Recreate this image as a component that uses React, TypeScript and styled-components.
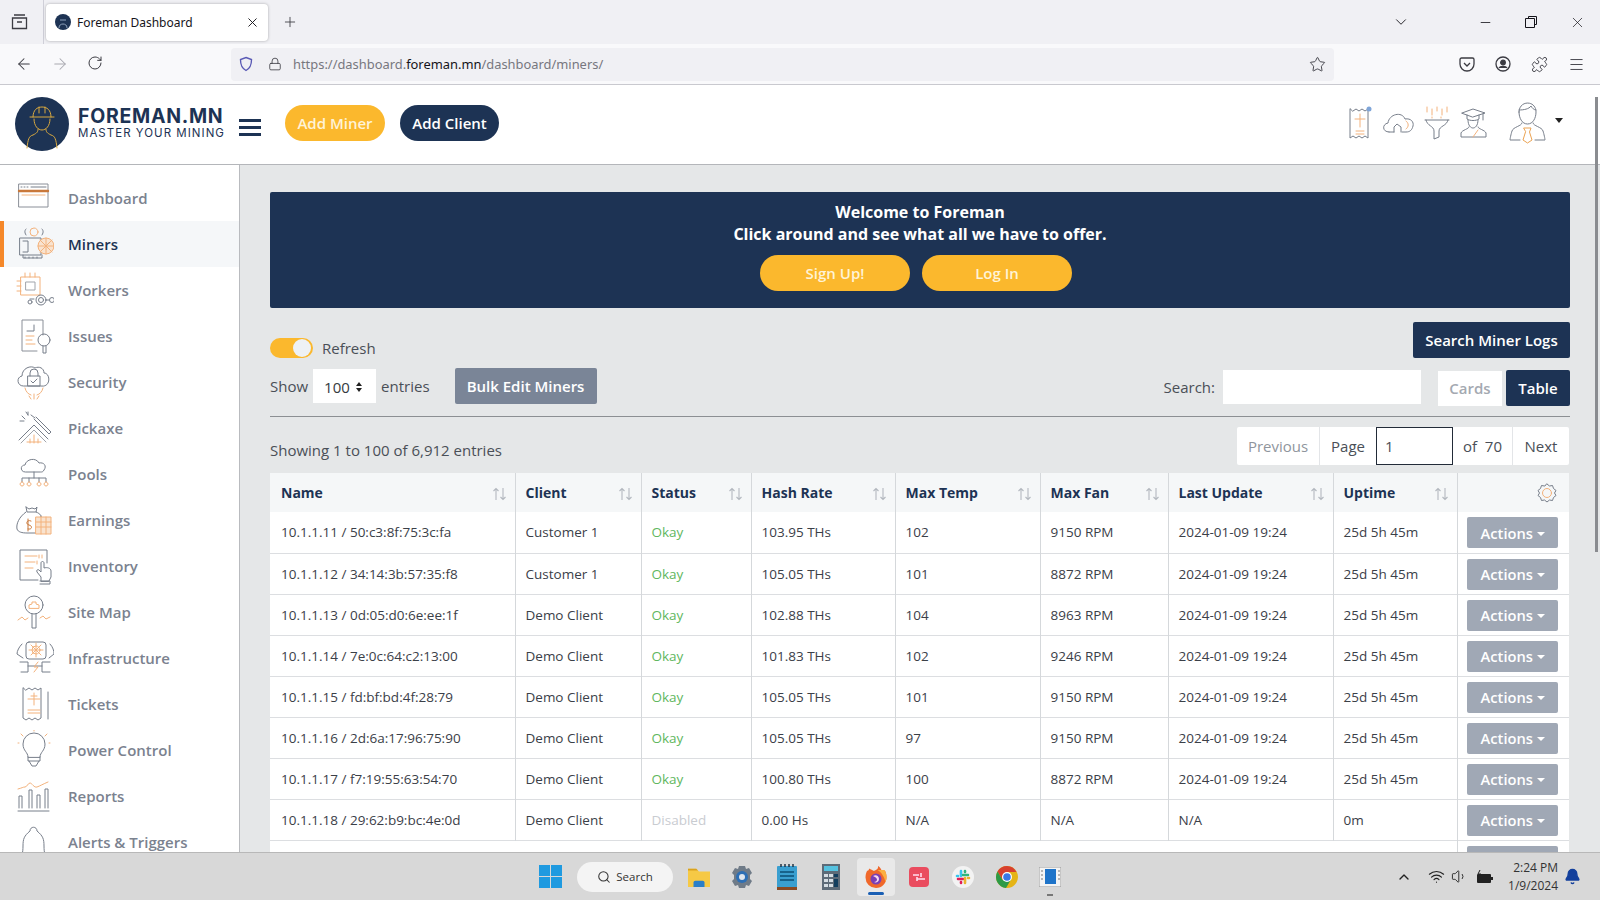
import React from "react";
import styled, { createGlobalStyle } from "styled-components";
import {
  ArrowLeft,
  ArrowRight,
  RotateCw,
  Lock,
  Star,
  ChevronDown,
  ChevronUp,
  Minus,
  X,
  Plus,
  Puzzle,
  Menu,
  Wifi,
  Volume1,
  Bell,
  Search as SearchIcon,
} from "lucide-react";

const navy = "#1d3354";
const gold = "#fbb82d";
const line = "#777e8a";
const peach = "#f3b27c";

const GlobalStyle = createGlobalStyle`
  html, body { margin: 0; padding: 0; height: 100%; overflow: hidden; background: #fff; }
  body { font-family: "Open Sans", "Noto Sans", sans-serif; color: #343a40; }
  * { box-sizing: border-box; }
`;

const Page = styled.div`
  position: relative;
  width: 1600px;
  height: 900px;
  display: flex;
  flex-direction: column;
  overflow: hidden;
`;
const Spacer = styled.span<{ $w: number }>`
  width: ${(p) => p.$w}px;
  flex: none;
`;

/* browser chrome */
const TabStrip = styled.div`
  height: 44px;
  background: #f0f0f4;
  display: flex;
  align-items: center;
  flex: none;
`;
const TabListButton = styled.div`
  width: 44px;
  height: 100%;
  display: flex;
  align-items: center;
  padding-left: 11px;
  border-right: 1px solid #cfcfd8;
  margin-right: 2px;
  flex: none;
`;
const Tab = styled.div`
  width: 222px;
  height: 37px;
  background: #fff;
  border-radius: 4px;
  box-shadow: 0 0 3px rgba(0, 0, 0, 0.3);
  display: flex;
  align-items: center;
  padding: 0 8px 0 9px;
  font-size: 12px;
  color: #15141a;
  font-family: "Noto Sans", sans-serif;
  flex: none;
`;
const TabTitle = styled.span`
  margin-left: 6px;
  flex: 1;
`;
const WindowRight = styled.div`
  margin-left: auto;
  display: flex;
  align-items: center;
  color: #15141a;
`;
const WinButton = styled.div<{ $w: number; $mr?: number }>`
  width: ${(p) => p.$w}px;
  margin-right: ${(p) => p.$mr ?? 0}px;
  display: flex;
  justify-content: center;
`;
const PlusButton = styled.div`
  margin-left: 14px;
  display: flex;
  color: #3c3c42;
`;
const NavBar = styled.div`
  height: 41px;
  background: #f9f9fb;
  border-bottom: 1px solid #c9c9cf;
  display: flex;
  align-items: center;
  flex: none;
  color: #3b3b42;
`;
const NavButtons = styled.div`
  width: 231px;
  display: flex;
  padding-left: 15px;
  gap: 18px;
  flex: none;
`;
const UrlBar = styled.div`
  width: 1103px;
  height: 33px;
  background: #f0f0f4;
  border-radius: 4px;
  display: flex;
  align-items: center;
  padding: 0 8px 0 7px;
  font-size: 12.9px;
  font-family: "Noto Sans", sans-serif;
  color: #77777f;
`;
const UrlText = styled.span`
  margin-left: 11px;
  flex: 1;
  b { color: #15141a; font-weight: 400; }
`;
const NavExtras = styled.div`
  display: flex;
  margin-left: 125px;
  gap: 20px;
  align-items: center;
`;

/* site header */
const Header = styled.header`
  height: 80px;
  flex: none;
  background: #fff;
  border-bottom: 1px solid #b4b6ba;
  display: flex;
  align-items: center;
  padding: 0 37px 4px 15px;
`;
const LogoBox = styled.div`
  display: flex;
  margin-top: 2px;
`;
const LogoText = styled.div`
  margin-left: 9px;
  color: ${navy};
  font-family: "Inter", "Liberation Sans", sans-serif;
  width: 146px;
`;
const LogoTitle = styled.div`
  font-size: 19.5px;
  line-height: 21px;
  font-weight: 700;
  letter-spacing: 0.72px;
`;
const LogoTag = styled.div`
  font-size: 11.5px;
  line-height: 13px;
  font-weight: 400;
  letter-spacing: 1.02px;
  white-space: nowrap;
`;
const Burger = styled.div`
  margin: 9px 24px 0 15px;
  width: 22px;
  display: flex;
  flex-direction: column;
  gap: 4px;
  flex: none;
  i { display: block; height: 3px; background: ${navy}; }
`;
const PillButton = styled.div<{ $bg: string; $fg: string; $w: number }>`
  width: ${(p) => p.$w}px;
  height: 36px;
  border-radius: 18px;
  background: ${(p) => p.$bg};
  color: ${(p) => p.$fg};
  font-size: 15px;
  font-weight: 600;
  display: flex;
  align-items: center;
  justify-content: center;
  margin-right: 15px;
`;
const HeaderIcons = styled.div`
  margin-left: auto;
  display: flex;
  align-items: center;
  gap: 10px;
`;
const Caret = styled.span`
  width: 0;
  height: 0;
  border: 4px solid transparent;
  border-top: 5px solid #222;
  border-bottom: 0;
  margin-left: -1px;
  margin-top: -4px;
`;

/* body */
const Body = styled.div`
  flex: 1;
  min-height: 0;
  display: flex;
`;
const Sidebar = styled.nav`
  width: 240px;
  flex: none;
  background: #fff;
  border-right: 1px solid #b9bbbf;
  padding-top: 10px;
  overflow: hidden;
`;
const NavItem = styled.div<{ $active?: boolean }>`
  height: 46px;
  display: flex;
  align-items: center;
  padding-left: ${(p) => (p.$active ? 10 : 14)}px;
  gap: 14px;
  font-size: 15px;
  font-weight: 600;
  color: ${(p) => (p.$active ? navy : "#7b828f")};
  background: ${(p) => (p.$active ? "#f5f7f9" : "transparent")};
  border-left: ${(p) => (p.$active ? `4px solid #f5882a` : "none")};
`;
const Main = styled.main`
  flex: 1;
  min-width: 0;
  background: #e5e7e8;
  padding: 27px 30px 0 30px;
  overflow: hidden;
`;
const Banner = styled.section`
  height: 116px;
  background: ${navy};
  border-radius: 2px;
  color: #fff;
  text-align: center;
  padding-top: 9px;
  font-size: 16px;
  font-weight: 700;
  line-height: 22px;
`;
const BannerActions = styled.div`
  display: flex;
  justify-content: center;
  gap: 12px;
  margin-top: 10px;
  padding-right: 8px;
`;
const BannerButton = styled.div`
  width: 150px;
  height: 36px;
  border-radius: 18px;
  background: ${gold};
  color: #fff3d6;
  font-size: 15px;
  font-weight: 600;
  line-height: 36px;
`;
const Controls = styled.div`
  height: 109px;
  padding: 15px 0 10px;
  border-bottom: 1px solid #8c8f93;
  display: flex;
  justify-content: space-between;
  font-size: 15px;
  color: #4a4f57;
`;
const ControlColumn = styled.div<{ $end?: boolean }>`
  display: flex;
  flex-direction: column;
  align-items: ${(p) => (p.$end ? "flex-end" : "flex-start")};
  justify-content: flex-end;
  gap: ${(p) => (p.$end ? 12 : 10)}px;
  padding-bottom: ${(p) => (p.$end ? 0 : 2)}px;
`;
const ControlRow = styled.div`
  display: flex;
  align-items: center;
`;
const Toggle = styled.div`
  position: relative;
  width: 43px;
  height: 20px;
  border-radius: 10px;
  background: ${gold};
  margin-right: 9px;
  &::after {
    content: "";
    position: absolute;
    right: 2px;
    top: 1px;
    width: 18px;
    height: 18px;
    border-radius: 50%;
    background: #eef1f4;
  }
`;
const SelectBox = styled.div`
  width: 63px;
  height: 34px;
  background: #fff;
  margin: 0 5px 0 5px;
  display: flex;
  align-items: center;
  padding: 2px 0 0 11px;
  gap: 6px;
  font-size: 15px;
  color: #343a40;
  span { display: flex; flex-direction: column; gap: 2px; }
  i { width: 0; height: 0; border: 3.5px solid transparent; }
  i:first-child { border-bottom: 4px solid #222; border-top: 0; }
  i:last-child { border-top: 4px solid #222; border-bottom: 0; }
`;
const BulkButton = styled.div`
  width: 142px;
  height: 36px;
  margin-left: 25px;
  background: #7a8597;
  color: #fff;
  border-radius: 2px;
  font-size: 15px;
  font-weight: 600;
  text-align: center;
  line-height: 36px;
`;
const NavyButton = styled.div<{ $w: number }>`
  width: ${(p) => p.$w}px;
  height: 36px;
  background: ${navy};
  color: #fff;
  border-radius: 2px;
  font-size: 15px;
  font-weight: 600;
  text-align: center;
  line-height: 36px;
`;
const SearchLabel = styled.span`
  margin-bottom: 2px;
`;
const SearchInput = styled.div`
  width: 198px;
  height: 34px;
  background: #fff;
  margin: 0 17px 2px 8px;
`;
const CardsTab = styled.div`
  width: 64px;
  height: 35px;
  background: #fff;
  color: #a4a9b1;
  font-weight: 600;
  font-size: 15px;
  text-align: center;
  line-height: 35px;
  margin-right: 4px;
`;
const InfoRow = styled.div`
  display: flex;
  align-items: center;
  justify-content: space-between;
  margin: 10px 0 8px;
  height: 38px;
  font-size: 15px;
  color: #4a4f57;
`;
const InfoText = styled.span`
  margin-top: 8px;
`;
const Pager = styled.div`
  display: flex;
  height: 38px;
  background: #fff;
  margin-right: 1px;
  border-radius: 2px;
`;
const PagerCell = styled.div<{ $w: number; $muted?: boolean; $line?: boolean }>`
  width: ${(p) => p.$w}px;
  display: flex;
  align-items: center;
  justify-content: center;
  color: ${(p) => (p.$muted ? "#8f959d" : "#4a4f57")};
  border-right: ${(p) => (p.$line ? "1px solid #e3e5e8" : "none")};
`;
const PageInput = styled.div`
  width: 77px;
  border: 1px solid #222b38;
  display: flex;
  align-items: center;
  padding-left: 8px;
`;
const TableWrap = styled.table`
  width: 1299px;
  border-collapse: collapse;
  table-layout: fixed;
  background: #fff;
  font-size: 13.5px;
`;
const HeadCell = styled.th<{ $w: number }>`
  width: ${(p) => p.$w}px;
  height: 39px;
  background: #f5f7f8;
  border-right: 1px solid #d5d8db;
  padding: 0 8px 0 10px;
  text-align: left;
  color: ${navy};
  font-size: 14px;
  font-weight: 700;
  &:first-child { padding-left: 11px; }
  &:last-child { border-right: none; }
`;
const HeadInner = styled.div`
  display: flex;
  align-items: center;
  justify-content: space-between;
`;
const GearSlot = styled.div`
  display: flex;
  justify-content: flex-end;
  padding-right: 4px;
`;
const Row = styled.tr`
  height: 41px;
  border-bottom: 1px solid #dcdee1;
`;
const Cell = styled.td<{ $status?: "ok" | "off" }>`
  padding: 0 0 0 10px;
  border-right: 1px solid #d5d8db;
  color: ${(p) => (p.$status === "ok" ? "#5fb760" : p.$status === "off" ? "#c9ccd1" : "#3b4048")};
  white-space: nowrap;
  &:first-child { padding-left: 11px; }
  &:last-child { border-right: none; text-align: center; padding: 0; }
`;
const ActionsButton = styled.div`
  display: inline-flex;
  align-items: center;
  justify-content: center;
  gap: 4px;
  width: 91px;
  height: 31px;
  background: #a0a8b5;
  border-radius: 2px;
  color: #fff;
  font-size: 14.7px;
  font-weight: 600;
  margin: 1px 0 0 -1px;
  vertical-align: middle;
  i { width: 0; height: 0; border: 4px solid transparent; border-top: 4px solid #fff; border-bottom: 0; margin-top: 2px; }
`;
const ScrollThumb = styled.div`
  position: absolute;
  right: 2px;
  top: 97px;
  width: 3px;
  height: 455px;
  background: #8a8c90;
`;

/* taskbar */
const Taskbar = styled.footer`
  height: 48px;
  flex: none;
  background: #d8d8d8;
  border-top: 1px solid #b8b8b8;
  display: flex;
  align-items: center;
  padding: 0 19px 0 539px;
  position: relative;
  z-index: 1;
`;
const TaskSearch = styled.div`
  width: 96px;
  height: 30px;
  margin: 0 15px 0 15px;
  border-radius: 15px;
  background: #f4f4f4;
  display: flex;
  align-items: center;
  justify-content: center;
  gap: 5px;
  font-size: 11.5px;
  color: #333;
`;
const TaskIcon = styled.div<{ $active?: boolean; $gap: number }>`
  position: relative;
  width: ${(p) => (p.$active ? 38 : 22)}px;
  height: ${(p) => (p.$active ? 38 : 24)}px;
  margin-right: ${(p) => p.$gap}px;
  display: flex;
  align-items: center;
  justify-content: center;
  background: ${(p) => (p.$active ? "#e9e9e9" : "transparent")};
  border-radius: 4px;
  flex: none;
  &::after {
    content: "";
    display: ${(p) => (p.$active ? "block" : "none")};
    position: absolute;
    bottom: 1px;
    left: 11px;
    width: 16px;
    height: 3px;
    border-radius: 2px;
    background: #1a5fb4;
  }
`;
const AppDot = styled.span`
  position: absolute;
  left: 8px;
  bottom: -7px;
  width: 6px;
  height: 2px;
  background: #777;
`;
const Tray = styled.div`
  margin-left: auto;
  display: flex;
  align-items: center;
  color: #222;
`;
const Clock = styled.div`
  margin: 0 6px 0 14px;
  text-align: right;
  font-size: 12px;
  line-height: 18px;
  color: #333;
`;

/* icons */
const Ic: React.FC<{ w?: number; h?: number; box?: string; children: React.ReactNode }> = ({ w = 40, h = 40, box = "0 0 40 40", children }) => (
  <svg width={w} height={h} viewBox={box} fill="none" stroke={line} strokeWidth="1" strokeLinecap="round" strokeLinejoin="round" style={{ flex: "none" }}>
    {children}
  </svg>
);
const P: React.FC<{ d: string }> = ({ d }) => <path d={d} stroke={peach} />;

const SortMark = () => (
  <svg width="15" height="14" viewBox="0 0 15 14" fill="none" stroke="#b3b8bf" strokeWidth="1.1" style={{ flex: "none", marginTop: 3 }}>
    <path d="M4 13V1.500M1.500 4L4 1.500 6.500 4M11 1v11.500M8.500 10l2.500 2.500 2.500-2.500" />
  </svg>
);

const icons: Record<string, React.ReactNode> = {
  Dashboard: (
    <>
      <rect x="5" y="6" width="29" height="23" stroke="#8a8f98" />
      <path d="M5 13h29" stroke="#c9783a" strokeWidth="2.4" />
      <path d="M7 9h1M10 9h1M13 9h1M17 9h15" />
      <P d="M8 17h23" />
    </>
  ),
  Miners: (
    <>
      <rect x="6" y="14" width="21" height="17" />
      <path d="M9 17h5v11H9M9 31v3h19v-3M11 34v-1M15 34v-1M19 34v-1M23 34v-1" />
      <circle cx="32" cy="22" r="8" fill="#f9e3cf" stroke={peach} />
      <P d="M32 14v16M24 22h16M26 16l12 12M38 16L26 28" />
      <circle cx="20" cy="8" r="4" stroke={peach} />
      <path d="M12 11c-2-3-1-5 0-6M28 11c2-3 1-5 0-6" />
    </>
  ),
  Workers: (
    <>
      <rect x="7" y="7" width="19" height="18" stroke={peach} />
      <rect x="12" y="12" width="9" height="8" stroke="#a0a4ab" />
      <P d="M3 11h4M3 16h4M3 21h4M11 3v4M16 3v4M21 3v4" />
      <circle cx="27" cy="30" r="5" />
      <circle cx="27" cy="30" r="2.5" />
      <circle cx="38" cy="30" r="2.5" />
      <circle cx="16" cy="32" r="2" />
      <path d="M20 29h-4M32 30h3" />
    </>
  ),
  Issues: (
    <>
      <path d="M29 19V4H8v31h15" stroke="#8a8f98" />
      <path d="M20 9v6h-7" />
      <P d="M12 20h8M12 24h6M12 28h9" />
      <circle cx="30" cy="24" r="6" />
      <path d="M29 30v7h3v-7" />
    </>
  ),
  Security: (
    <>
      <path d="M9 24c-6 0-7-9-1-10 0-8 9-11 13-8 4-2 9 0 9 5 6 0 7 12 0 13z" />
      <rect x="14" y="14" width="12" height="10" />
      <path d="M16 14v-3a4 4 0 0 1 8 0v3M17 19l2 2 4-4" />
      <P d="M11 26c1 4 3 6 6 7M29 26c-1 4-3 6-6 7M15 34l2 3M20 32v5M25 34l-2 3" />
    </>
  ),
  Pickaxe: (
    <>
      <path d="M22 9l15 15-2 2L20 11M17 7l4 3M12 4l2 3" />
      <path d="M5 32l15-15 14 14" />
      <path d="M7 35l13-13 12 12" stroke="#a0a4ab" />
      <P d="M20 27v8M16 31v4M24 31v4M13 34h14" />
      <path d="M8 8l3 3M6 13h4M14 4v3" />
    </>
  ),
  Pools: (
    <>
      <path d="M11 18c-5 0-5-7 0-7 1-6 11-8 14-2 5-1 8 3 5 7-1 2-2 2-3 2z" />
      <path d="M20 18v6M8 28v-4h24v4M15 28v-4M25 28v-4" />
      <P d="M8 28a2 2 0 1 0 .1 0M15 28a2 2 0 1 0 .1 0M25 28a2 2 0 1 0 .1 0M32 28a2 2 0 1 0 .1 0" />
    </>
  ),
  Earnings: (
    <>
      <path d="M12 7l3 2 3-1 3 1 2-2-1 5c5 2 5 4 5 5v-1M12 12c-7 5-10 12-9 17 1 3 5 4 10 4h12" />
      <path d="M12 7l1 5h9" />
      <path d="M14 19v12M17 21c-4-2-6 3-2 4s3 5-1 4" stroke="#c9783a" />
      <rect x="22" y="17" width="15" height="17" fill="#f9e3cf" stroke={peach} />
      <P d="M22 22h15M22 27h15M27 17v17M32 17v17" />
    </>
  ),
  Inventory: (
    <>
      <path d="M33 17V4H6v30h18" />
      <P d="M11 10h12M25 9v3M28 9v3M11 16h10M23 15v3M11 22h8" />
      <path d="M27 35v-4l-4-5c-1-2 1-3 2-2l2 2v-9c0-2 3-2 3 0v5c3-1 7 0 7 3v6l-2 4zM26 35h10v3H26" />
    </>
  ),
  "Site Map": (
    <>
      <circle cx="20" cy="13" r="9" />
      <P d="M15 16v-3l3-1v-2h4v2l3 1v3z" />
      <P d="M4 28l4-3 3 3 3-2M26 26l3-2 3 3 4-2" />
      <path d="M18 22v14h4V22" />
    </>
  ),
  Infrastructure: (
    <>
      <rect x="12" y="4" width="20" height="17" rx="3" />
      <circle cx="22" cy="12" r="4" stroke={peach} />
      <P d="M22 5v14M15 12h14M17 7l10 10M27 7L17 17" />
      <path d="M8 6c-3 3-5 7-5 10l6 4M36 6c3 3 4 7 4 10l-5 4M6 24h8v10H7M36 24h-8v10h8M14 28h14" />
      <P d="M24 24l-4 5h4l-4 5" />
    </>
  ),
  Tickets: (
    <>
      <path d="M9 4v30l3 2 3-2 3 2 3-2 3 2 3-2V4l-3 2-3-2-3 2-3-2-3 2z" />
      <path d="M34 8v27" />
      <P d="M14 15h12M20 9v12M17 12h6M14 26h12M14 29h12" />
    </>
  ),
  "Power Control": (
    <>
      <path d="M14 27c0-5-5-6-5-13a11 11 0 0 1 22 0c0 7-5 8-5 13z" />
      <path d="M14 27v4h12v-4M15 31l3 5h4l3-5" />
      <P d="M20 0v1M7 4l2 2M33 4l-2 2M4 13h1M35 13h1" />
    </>
  ),
  Reports: (
    <>
      <path d="M4 35h31M5 32V20h3v12M15 32V14h3v18M23 32V19h3v13M31 32V13h3v19" />
      <P d="M4 13c4-1 5-2 7-2s3-4 5-4 4 5 7 4 6-3 11-5" />
    </>
  ),
  "Alerts & Triggers": (
    <path d="M4 38c4-3 5-7 5-14 0-7 1-10 7-15 0-5 7-5 7 0 6 5 7 8 7 15 0 7 1 11 5 14" />
  ),
};

const navItems = Object.keys(icons);

const LogoMark = () => (
  <svg width="54" height="54" viewBox="0 0 54 54" style={{ flex: "none" }}>
    <circle cx="27" cy="27" r="27" fill={navy} />
    <g fill="none" stroke="#d9a93f" strokeWidth="1" strokeLinecap="round">
      <path d="M18 20c0-7 4-10 9-10s9 3 9 10M15 20h24M24 10v6M30 10v6" />
      <path d="M19 22c0 7 4 11 8 11s8-4 8-11" />
      <path d="M23 32c0 3-1 4-5 6-4 1-5 4-6 13M31 32c0 3 1 4 5 6 4 1 5 4 6 13" />
    </g>
  </svg>
);

const columns = [
  { t: "Name", w: 245 },
  { t: "Client", w: 126 },
  { t: "Status", w: 110 },
  { t: "Hash Rate", w: 144 },
  { t: "Max Temp", w: 145 },
  { t: "Max Fan", w: 128 },
  { t: "Last Update", w: 165 },
  { t: "Uptime", w: 124 },
];

const miners = [
  ["10.1.1.11 / 50:c3:8f:75:3c:fa", "Customer 1", "Okay", "103.95 THs", "102", "9150 RPM", "2024-01-09 19:24", "25d 5h 45m"],
  ["10.1.1.12 / 34:14:3b:57:35:f8", "Customer 1", "Okay", "105.05 THs", "101", "8872 RPM", "2024-01-09 19:24", "25d 5h 45m"],
  ["10.1.1.13 / 0d:05:d0:6e:ee:1f", "Demo Client", "Okay", "102.88 THs", "104", "8963 RPM", "2024-01-09 19:24", "25d 5h 45m"],
  ["10.1.1.14 / 7e:0c:64:c2:13:00", "Demo Client", "Okay", "101.83 THs", "102", "9246 RPM", "2024-01-09 19:24", "25d 5h 45m"],
  ["10.1.1.15 / fd:bf:bd:4f:28:79", "Demo Client", "Okay", "105.05 THs", "101", "9150 RPM", "2024-01-09 19:24", "25d 5h 45m"],
  ["10.1.1.16 / 2d:6a:17:96:75:90", "Demo Client", "Okay", "105.05 THs", "97", "9150 RPM", "2024-01-09 19:24", "25d 5h 45m"],
  ["10.1.1.17 / f7:19:55:63:54:70", "Demo Client", "Okay", "100.80 THs", "100", "8872 RPM", "2024-01-09 19:24", "25d 5h 45m"],
  ["10.1.1.18 / 29:62:b9:bc:4e:0d", "Demo Client", "Disabled", "0.00 Hs", "N/A", "N/A", "N/A", "0m"],
];

const Chrome = () => (
  <svg width="22" height="22" viewBox="0 0 22 22">
    <circle cx="11" cy="11" r="11" fill="#e5b416" />
    <path d="M11 0a11 11 0 0 0-9.5 5.5L6.5 14 11 6h9.5A11 11 0 0 0 11 0z" fill="#d8402f" />
    <path d="M1.5 5.5A11 11 0 0 0 10 22l5-8.5-8.5.5z" fill="#2d9a47" />
    <circle cx="11" cy="11" r="5" fill="#fff" />
    <circle cx="11" cy="11" r="3.8" fill="#3b78e7" />
  </svg>
);
const Firefox = () => (
  <svg width="24" height="24" viewBox="0 0 24 24">
    <path d="M12 23a10.500 10.500 0 0 0 10.500-11c0-3-1-5.500-2-7 0 2-1 3-2 3.500C18 5 16 2 14 1c.5 3-2 4-4 5C8 5 6 4 5 3.500 5 5 4.500 5.500 3 6 2 8 1.500 10 1.500 12.500A10.500 10.500 0 0 0 12 23z" fill="#f0682b" />
    <path d="M20.500 5c1 1.500 2 4 2 7 0 2-.5 3.500-1 5-1-4-3-9-8-12 2 0 5 0 7 0z" fill="#fbb040" />
    <circle cx="12" cy="14" r="5.500" fill="#7a3fb5" />
    <path d="M9 11c3-2 6 0 6 3s-3 4-5 3c2 0 3-1 3-2.500S11 12 9 11z" fill="#f8d8ef" />
  </svg>
);
const Slack = () => (
  <svg width="22" height="22" viewBox="0 0 22 22">
    <circle cx="11" cy="11" r="11" fill="#f3f3f3" />
    <g strokeWidth="2.600" strokeLinecap="round">
      <path d="M9 5v5M5 10h1" stroke="#36c5f0" />
      <path d="M6 13h5M9 17v-1" stroke="#e01e5a" />
      <path d="M13 17v-5M17 12h-1" stroke="#ecb22e" />
      <path d="M16 9h-5M13 5v1" stroke="#2eb67d" />
    </g>
  </svg>
);
const Gear = () => (
  <svg width="22" height="24" viewBox="0 0 22 24">
    <path d="M8 1h6l1 3 3-1 3 5-2 2v4l2 2-3 5-3-1-1 3H8l-1-3-3 1-3-5 2-2v-4L1 8l3-5 3 1z" fill="#6f7b88" />
    <circle cx="11" cy="12" r="6" fill="#2d6fb5" />
    <circle cx="11" cy="12" r="3" fill="#dfe6ee" />
  </svg>
);

const App: React.FC = () => (
  <Page>
    <GlobalStyle />
    <TabStrip>
      <TabListButton>
        <svg width="17" height="16" viewBox="0 0 17 16" fill="none" stroke="#3b3b42" strokeWidth="1.300">
          <path d="M3 1h11M1.500 4h14v10.500h-14zM6 8h5" />
        </svg>
      </TabListButton>
      <Tab>
        <svg width="16" height="16" viewBox="0 0 16 16">
          <circle cx="8" cy="8" r="8" fill={navy} />
          <path d="M4 14c0-3 2-4 4-4s4 1 4 4M5 6h6" stroke="#8fa3bd" fill="none" />
        </svg>
        <TabTitle>Foreman Dashboard</TabTitle>
        <X size={15} strokeWidth={1.500} />
      </Tab>
      <PlusButton>
        <Plus size={16} strokeWidth={1.300} />
      </PlusButton>
      <WindowRight>
        <WinButton $w={30} $mr={46}><ChevronDown size={18} strokeWidth={1.200} /></WinButton>
        <WinButton $w={46}><Minus size={15} strokeWidth={1.300} /></WinButton>
        <WinButton $w={46}>
          <svg width="12" height="12" viewBox="0 0 12 12" fill="none" stroke="#15141a">
            <path d="M3.500 2.500v-2h8v8h-2M.5 2.500h9v9h-9z" />
          </svg>
        </WinButton>
        <WinButton $w={46}><X size={17} strokeWidth={1} /></WinButton>
      </WindowRight>
    </TabStrip>

    <NavBar>
      <NavButtons>
        <ArrowLeft size={18} strokeWidth={1.400} />
        <ArrowRight size={18} strokeWidth={1.400} color="#a9a9b0" />
        <RotateCw size={16} strokeWidth={1.500} />
      </NavButtons>
      <UrlBar>
        <svg width="16" height="16" viewBox="0 0 16 16" fill="none" stroke="#5a5ab5" strokeWidth="1.400">
          <path d="M8 1.500l5.500 2c0 5.500-1 8.500-5.500 11-4.500-2.500-5.500-5.500-5.500-11z" />
        </svg>
        <Spacer $w={14} />
        <Lock size={14} strokeWidth={1.400} color="#3b3b42" />
        <UrlText>https://dashboard.<b>foreman.mn</b>/dashboard/miners/</UrlText>
        <Star size={17} strokeWidth={1.300} color="#3b3b42" />
      </UrlBar>
      <NavExtras>
        <svg width="16" height="15" viewBox="0 0 16 15" fill="none" stroke="#3b3b42" strokeWidth="1.300">
          <path d="M2.500 1h11A1.500 1.500 0 0 1 15 2.500V7a7 7 0 0 1-14 0V2.500A1.500 1.500 0 0 1 2.500 1zM5 6l3 3 3-3" />
        </svg>
        <svg width="16" height="16" viewBox="0 0 16 16" fill="none" stroke="#3b3b42" strokeWidth="1.300">
          <circle cx="8" cy="8" r="7" />
          <circle cx="8" cy="6.500" r="2.300" fill="#3b3b42" />
          <path d="M4 12c1-2 7-2 8 0" fill="#3b3b42" />
        </svg>
        <Puzzle size={17} strokeWidth={1.300} />
        <Menu size={17} strokeWidth={1.300} />
      </NavExtras>
    </NavBar>

    <Header>
      <LogoBox><LogoMark /></LogoBox>
      <LogoText>
        <LogoTitle>FOREMAN.MN</LogoTitle>
        <LogoTag>MASTER YOUR MINING</LogoTag>
      </LogoText>
      <Burger><i /><i /><i /></Burger>
      <PillButton $bg={gold} $fg="#fff3d6" $w={100}>Add Miner</PillButton>
      <PillButton $bg={navy} $fg="#fff" $w={99}>Add Client</PillButton>
      <HeaderIcons>
        <Ic w={24} h={34} box="0 0 24 34">
          <path d="M2 3v29l3-2 3 2 3-2 3 2 3-2 3 2V3l-3 2-3-2-3 2-3-2-3 2z" />
          <P d="M12 8v13M7 13h10M8 25h8M8 28h8" />
          <circle cx="21" cy="3" r="2.500" fill="#7fa5d8" stroke="none" />
        </Ic>
        <Ic w={32} h={22} box="0 0 32 22">
          <path d="M7 20c-7 0-7-8-1-9 1-9 14-12 17-4 6-1 9 3 8 7-1 4-3 6-7 6h-4M7 20h5M12 20v-5l3-3 4 3v5" />
          <P d="M24 9c3 2 3 6 0 8" />
        </Ic>
        <Ic w={26} h={35} box="0 0 26 35">
          <path d="M1 15h24M2 15c1 6 8 6 8 11v8l5-2v-6c0-5 8-5 9-11" />
          <P d="M3 2v5M8 4v6M13 2v4M18 4v6M23 2v5M8 12v1M17 12v1" />
        </Ic>
        <Ic w={27} h={31} box="0 0 27 31">
          <path d="M2 6l11-4 12 4-12 4zM7 8v4c3 2 9 2 12 0V8M23 7v6" />
          <path d="M8 13c0 6 3 8 5 8s5-2 5-8M9 20c0 2-7 3-8 6v4h25v-4c-1-3-8-4-8-6" />
          <P d="M13 30l5-7" />
        </Ic>
        <Spacer $w={2} />
        <Ic w={37} h={43} box="0 0 37 43">
          <path d="M10 11c0-12 17-12 17 0 0 6-3 12-8.500 12S10 17 10 11zM10 9c5 0 10-1 12-4 1 2 3 4 5 4" />
          <path d="M13 22c0 3-9 4-10 8-1 3-2 8-2 9h10M24 22c0 3 9 4 10 8 1 3 2 8 2 9H26" />
          <path d="M15 27h7l-1.500 4 2.500 8-4.500 3-4.500-3 2.500-8z" stroke="#eba353" />
        </Ic>
        <Caret />
      </HeaderIcons>
    </Header>

    <Body>
      <Sidebar>
        {navItems.map((name) => (
          <NavItem key={name} $active={name === "Miners"}>
            <Ic>{icons[name]}</Ic>
            {name}
          </NavItem>
        ))}
      </Sidebar>
      <Main>
        <Banner>
          Welcome to Foreman
          <br />
          Click around and see what all we have to offer.
          <BannerActions>
            <BannerButton>Sign Up!</BannerButton>
            <BannerButton>Log In</BannerButton>
          </BannerActions>
        </Banner>

        <Controls>
          <ControlColumn>
            <ControlRow><Toggle />Refresh</ControlRow>
            <ControlRow>
              Show
              <SelectBox>100<span><i /><i /></span></SelectBox>
              entries
              <BulkButton>Bulk Edit Miners</BulkButton>
            </ControlRow>
          </ControlColumn>
          <ControlColumn $end>
            <NavyButton $w={157}>Search Miner Logs</NavyButton>
            <ControlRow>
              <SearchLabel>Search:</SearchLabel>
              <SearchInput />
              <CardsTab>Cards</CardsTab>
              <NavyButton $w={64}>Table</NavyButton>
            </ControlRow>
          </ControlColumn>
        </Controls>

        <InfoRow>
          <InfoText>Showing 1 to 100 of 6,912 entries</InfoText>
          <Pager>
            <PagerCell $w={83} $muted $line>Previous</PagerCell>
            <PagerCell $w={56}>Page</PagerCell>
            <PageInput>1</PageInput>
            <PagerCell $w={60} $line>of&nbsp; 70</PagerCell>
            <PagerCell $w={56}>Next</PagerCell>
          </Pager>
        </InfoRow>

        <TableWrap>
          <thead>
            <tr>
              {columns.map((c) => (
                <HeadCell key={c.t} $w={c.w}>
                  <HeadInner>{c.t}<SortMark /></HeadInner>
                </HeadCell>
              ))}
              <HeadCell $w={112}>
                <GearSlot>
                  <Ic w={20} h={20} box="0 0 20 20">
                    <path d="M10 1l2.500 2 3-.5 1 3 2.500 2L17.500 10l1.500 2.500-2.500 2-1 3-3-.5L10 19l-2.500-2-3 .5-1-3L1 12.500 2.500 10 1 7.500l2.500-2 1-3 3 .5z" />
                    <circle cx="10" cy="10" r="4.500" stroke={peach} />
                  </Ic>
                </GearSlot>
              </HeadCell>
            </tr>
          </thead>
          <tbody>
            {miners.map((m) => (
              <Row key={m[0]}>
                {m.map((v, j) => (
                  <Cell key={j} $status={j === 2 ? (v === "Okay" ? "ok" : "off") : undefined}>{v}</Cell>
                ))}
                <Cell><ActionsButton>Actions<i /></ActionsButton></Cell>
              </Row>
            ))}
            <Row>
              <Cell colSpan={8} />
              <Cell><ActionsButton /></Cell>
            </Row>
          </tbody>
        </TableWrap>
      </Main>
    </Body>

    <Taskbar>
      <svg width="23" height="23" viewBox="0 0 23 23" style={{ flex: "none" }}>
        <path d="M0 0h11v11H0zM12 0h11v11H12zM0 12h11v11H0zM12 12h11v11H12z" fill="#1f9ae0" />
      </svg>
      <TaskSearch><SearchIcon size={14} strokeWidth={1.800} />Search</TaskSearch>
      <TaskIcon $gap={21}>
        <svg width="24" height="22" viewBox="0 0 24 22">
          <path d="M0 2h9l3 3h12v17H0z" fill="#f6c945" />
          <path d="M0 2h9l2 2H0z" fill="#d9a21f" />
          <path d="M6 22v-5a2 2 0 0 1 2-2h8a2 2 0 0 1 2 2v5z" fill="#2a7fc9" />
        </svg>
      </TaskIcon>
      <TaskIcon $gap={23}><Gear /></TaskIcon>
      <TaskIcon $gap={22}>
        <svg width="20" height="26" viewBox="0 0 20 26">
          <rect y="2" width="20" height="24" rx="1" fill="#3a9fd0" />
          <path d="M0 23h20v3H0z" fill="#8a4a24" />
          <path d="M3 8h14M3 12h14M3 16h14" stroke="#0d4f74" strokeWidth="1.500" />
          <path d="M4 0v3M8 0v3M12 0v3M16 0v3" stroke="#234" strokeWidth="1.500" />
        </svg>
      </TaskIcon>
      <TaskIcon $gap={15}>
        <svg width="18" height="26" viewBox="0 0 18 26">
          <rect width="18" height="26" fill="#5d6b78" />
          <rect x="2" y="2" width="14" height="5" fill="#55c2e0" />
          <path d="M2 10h4v3H2zM7 10h4v3H7zM2 15h4v3H2zM7 15h4v3H7zM2 20h4v3H2zM7 20h4v3H7z" fill="#d5dde3" />
          <path d="M12 10h4v3h-4zM12 15h4v8h-4z" fill="#123e5e" />
        </svg>
      </TaskIcon>
      <TaskIcon $active $gap={13}><Firefox /></TaskIcon>
      <TaskIcon $gap={22}>
        <svg width="20" height="20" viewBox="0 0 20 20">
          <rect width="20" height="20" rx="4" fill="#ea4c5f" />
          <path d="M4 8h6M8 12h8M12 6v4M8 10v4" stroke="#fde" strokeWidth="1.600" />
        </svg>
      </TaskIcon>
      <TaskIcon $gap={22}><Slack /></TaskIcon>
      <TaskIcon $gap={21}><Chrome /></TaskIcon>
      <TaskIcon $gap={0}>
        <svg width="22" height="20" viewBox="0 0 22 20">
          <rect width="22" height="20" fill="#f4f4f4" stroke="#999" />
          <rect x="6" y="2" width="11" height="15" fill="#1f74c9" />
          <path d="M2 4h2M2 8h2M2 12h2M19 4h2M19 8h2M19 12h2" stroke="#777" />
        </svg>
        <AppDot />
      </TaskIcon>
      <Tray>
        <ChevronUp size={16} strokeWidth={2} />
        <Spacer $w={16} />
        <Wifi size={17} strokeWidth={1.600} />
        <Spacer $w={6} />
        <Volume1 size={17} strokeWidth={1.300} />
        <Spacer $w={8} />
        <svg width="18" height="14" viewBox="0 0 18 14">
          <rect x="1" y="4" width="14" height="9" rx="1" fill="#222" />
          <path d="M15 7h2v3h-2z" fill="#222" />
          <path d="M4 0L2 4h3L3 7" stroke="#222" fill="none" />
        </svg>
        <Clock>2:24 PM<br />1/9/2024</Clock>
        <Bell size={17} fill="#123f9c" color="#123f9c" />
      </Tray>
    </Taskbar>
    <ScrollThumb />
  </Page>
);

export default App;
